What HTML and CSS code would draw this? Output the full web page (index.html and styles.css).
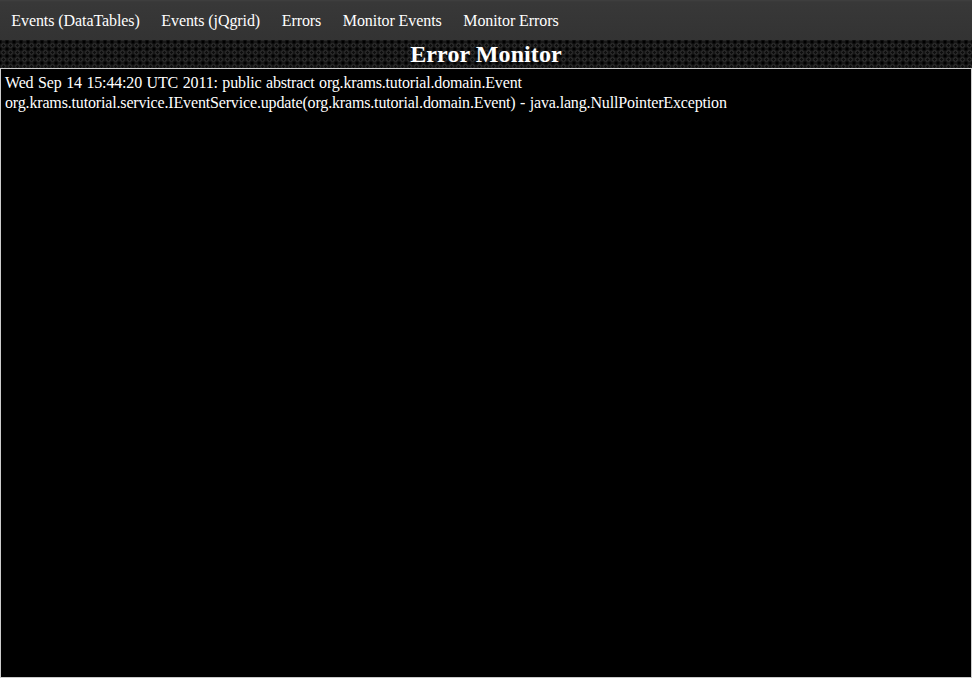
FILE: index.html
```html
<!DOCTYPE html>
<html lang="en">

<head>
<meta charset="UTF-8">
<title>Error Monitor</title>
<link rel="stylesheet" href="styles.css">
</head>

<body>

<ul class="menu">
<li><a href="#">Events (DataTables)</a></li>
<li><a href="#">Events (jQgrid)</a></li>
<li><a href="#">Errors</a></li>
<li><a href="#">Monitor Events</a></li>
<li><a href="#">Monitor Errors</a></li>
</ul>

<h1>Error Monitor</h1>

<div class="monitor">
Wed Sep 14 15:44:20 UTC 2011: public abstract org.krams.tutorial.domain.Event org.krams.tutorial.service.IEventService.update(org.krams.tutorial.domain.Event) - java.lang.NullPointerException
</div>

</body>

</html>
```

FILE: styles.css
```css
html, body {
height: 100%;
}

body {
margin: 0;
overflow: hidden;
display: flex;
flex-direction: column;
font-family: 'Liberation Serif', serif;
color: #fff;
background-color: #171717;
background-image:
radial-gradient(circle at 3.5px 3.5px, #000 0 1.4px, transparent 1.6px),
radial-gradient(circle at 3.5px 3.5px, #0e0e0e 0 1.2px, #272727 1.4px 2.6px, transparent 2.9px);
background-size: 7px 7px;
background-position: 3.5px 3.5px, 0 0;
}

.menu {
display: flex;
margin: 0;
padding: 0 0 0 0.5px;
height: 40px;
list-style: none;
background: linear-gradient(#404040 0, #383838 2px, #333 100%);
}

.menu a {
display: block;
padding: 11px 10.8px;
font-size: 16px;
line-height: 19px;
letter-spacing: -0.08px;
color: #fff;
text-decoration: none;
}

h1 {
margin: 0;
height: 28px;
font-size: 24px;
line-height: 29px;
letter-spacing: 0.08px;
text-align: center;
}

.monitor {
flex: 1;
padding: 4px;
font-size: 16px;
line-height: 20px;
letter-spacing: -0.16px;
word-spacing: 0.75px;
background: #000;
border: 1px solid #ccc;
}
```
